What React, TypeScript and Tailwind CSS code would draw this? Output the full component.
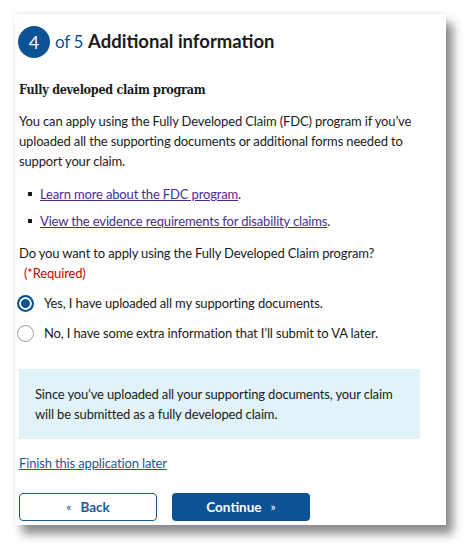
import React from "react";

const SANS = "font-['Lato','Noto_Sans',sans-serif]";
const BODY = "text-[13px] tracking-[-0.15px] leading-[20px]";

function Radio({ checked, label }: { checked?: boolean; label: string }) {
  return (
    <label className="flex items-center gap-[10px] h-[20px]">
      {checked ? (
        <span className="w-[17px] h-[17px] rounded-full bg-[#0b5394] border-[2px] border-[#0b5394] shadow-[inset_0_0_0_2px_#fff] shrink-0" />
      ) : (
        <span className="w-[17px] h-[17px] rounded-full border border-[#9a9a9a] bg-white shrink-0" />
      )}
      <span className={`${BODY} text-[#1b1b1b]`}>{label}</span>
    </label>
  );
}

export default function App() {
  return (
    <div className={`min-h-[554px] bg-white pl-[15px] pt-[14px] ${SANS}`}>
      <div className="w-[431px] h-[511px] bg-white pl-[3px] pr-[10px] shadow-[7px_9px_9px_rgba(0,0,0,0.45),0_-1px_4px_rgba(0,0,0,0.08)] flex flex-col">
        {/* heading */}
        <div className="flex items-center h-[32px] mt-[12px]">
          <span className="w-[32px] h-[32px] rounded-full bg-[#0b5394] text-white text-[18px] flex items-center justify-center">4</span>
          <span className="ml-[5px] text-[17px] tracking-[-0.3px] text-[#0b5394]">of 5</span>
          <span className="ml-[5px] text-[18.5px] font-bold text-[#1b1b1b]">Additional information</span>
        </div>

        <div className="pl-[1px]">
          <h3 className="mt-[22px] text-[12.5px] tracking-[-0.3px] font-bold text-[#1b1b1b] font-['DejaVu_Serif_Condensed','DejaVu_Serif',serif] leading-[20px]">
            Fully developed claim program
          </h3>
          <p className={`mt-[11px] ${BODY} text-[#1b1b1b]`}>
            You can apply using the Fully Developed Claim (FDC) program if you’ve uploaded all the supporting documents or additional forms needed to support your claim.
          </p>

          <ul className="mt-[13px] flex flex-col gap-[7px] pl-[9px]">
            <li className={`flex items-center h-[20px] ${BODY} text-[#1b1b1b]`}>
              <span className="w-[4px] h-[4px] bg-[#1b1b1b] mr-[8px]" />
              <a className="text-[#4c2c92] underline">Learn more about the FDC program</a>.
            </li>
            <li className={`flex items-center h-[20px] ${BODY} text-[#1b1b1b]`}>
              <span className="w-[4px] h-[4px] bg-[#1b1b1b] mr-[8px]" />
              <a className="text-[#4c2c92] underline">View the evidence requirements for disability claims</a>.
            </li>
          </ul>

          <p className={`mt-[12px] ${BODY} text-[#1b1b1b]`}>
            Do you want to apply using the Fully Developed Claim program?
          </p>
          <p className={`pl-[5px] ${BODY} text-[#b50909]`}>(*Required)</p>

          <div className="mt-[10px] flex flex-col gap-[10px] -ml-[2px]">
            <Radio checked label="Yes, I have uploaded all my supporting documents." />
            <Radio label="No, I have some extra information that I’ll submit to VA later." />
          </div>

          <div className="mt-[26px] w-[401px] h-[70px] bg-[#e1f3f8] px-[16px] flex items-center">
            <p className={`${BODY} text-[#1b1b1b]`}>
              Since you’ve uploaded all your supporting documents, your claim will be submitted as a fully developed claim.
            </p>
          </div>

          <a className={`block mt-[14px] ${BODY} text-[#1a5a96] underline w-fit`}>
            Finish this application later
          </a>

          <div className="mt-[20px] flex gap-[15px]">
            <button className="w-[138px] h-[28px] rounded-[4px] border-[1.5px] border-[#1a5a96] text-[#1a5a96] font-bold text-[13.5px] flex items-center justify-center gap-[9px]">
              <span className="text-[12px] font-normal">«</span> Back
            </button>
            <button className="w-[138px] h-[28px] rounded-[4px] bg-[#0b5394] text-white font-bold text-[13.5px] flex items-center justify-center gap-[9px]">
              Continue <span className="text-[12px] font-normal">»</span>
            </button>
          </div>
        </div>
      </div>
    </div>
  );
}
